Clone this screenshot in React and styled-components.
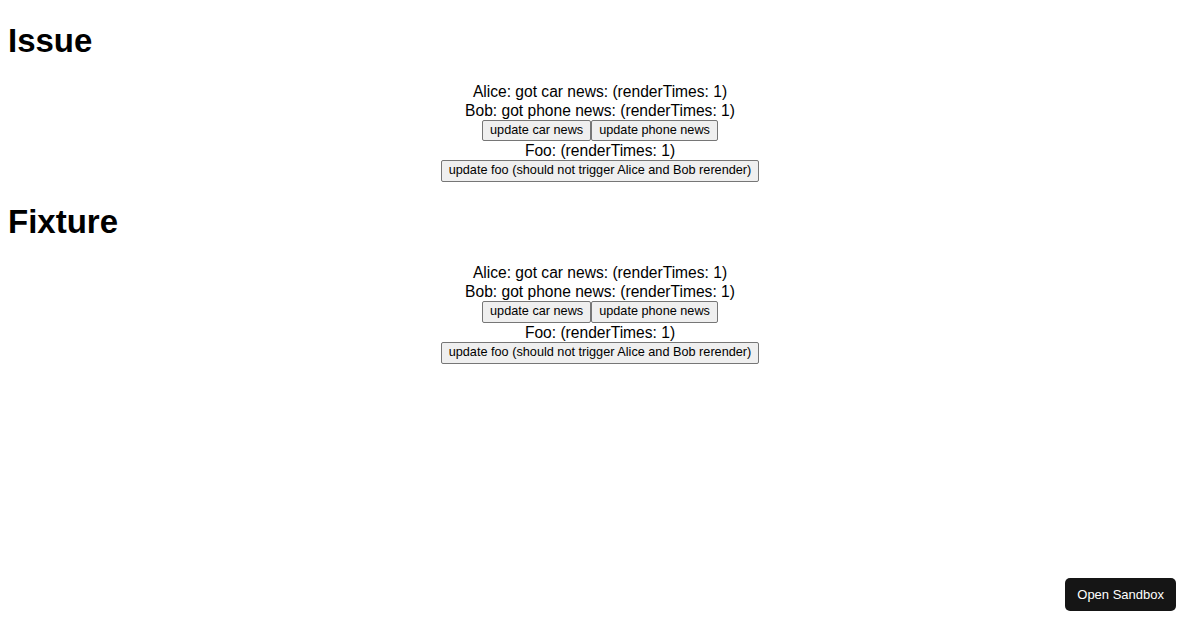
import React from "react";
import styled, { createGlobalStyle } from "styled-components";

const Global = createGlobalStyle`
  html, body {
    margin: 0;
    padding: 0;
  }
  body {
    padding: 0 8px;
    font-family: "Liberation Sans", Arial, sans-serif;
    background: #fff;
    color: #000;
  }
`;

const Title = styled.h1`
  font-size: 33px;
  font-weight: bold;
  margin: 21.5px 0 22px;
  line-height: 38px;
`;

const Demo = styled.div`
  text-align: center;
  font-size: 15.6px;
  line-height: 19px;
`;

const Line = styled.div``;

const ButtonRow = styled.div`
  display: flex;
  justify-content: center;
`;

const Btn = styled.button`
  font-family: "Liberation Sans", Arial, sans-serif;
  font-size: 12.7px;
  line-height: 15.7px;
  color: #000;
  background: #efefef;
  border: 1px solid #767676;
  border-radius: 2px;
  padding: 2px 7px;
  margin: 0;
  cursor: pointer;
`;

const SandboxButton = styled.button`
  position: fixed;
  right: 24px;
  bottom: 19px;
  background: #151515;
  color: #fff;
  border: none;
  border-radius: 5px;
  font-family: "Liberation Sans", Arial, sans-serif;
  font-size: 13px;
  line-height: 17px;
  padding: 8px 12px;
  cursor: pointer;
`;

function Example() {
  return (
    <Demo>
      <Line>Alice: got car news: (renderTimes: 1)</Line>
      <Line>Bob: got phone news: (renderTimes: 1)</Line>
      <ButtonRow>
        <Btn>update car news</Btn>
        <Btn>update phone news</Btn>
      </ButtonRow>
      <Line>Foo: (renderTimes: 1)</Line>
      <ButtonRow>
        <Btn>update foo (should not trigger Alice and Bob rerender)</Btn>
      </ButtonRow>
    </Demo>
  );
}

export default function App() {
  return (
    <>
      <Global />
      <Title>Issue</Title>
      <Example />
      <Title>Fixture</Title>
      <Example />
      <SandboxButton>Open Sandbox</SandboxButton>
    </>
  );
}
